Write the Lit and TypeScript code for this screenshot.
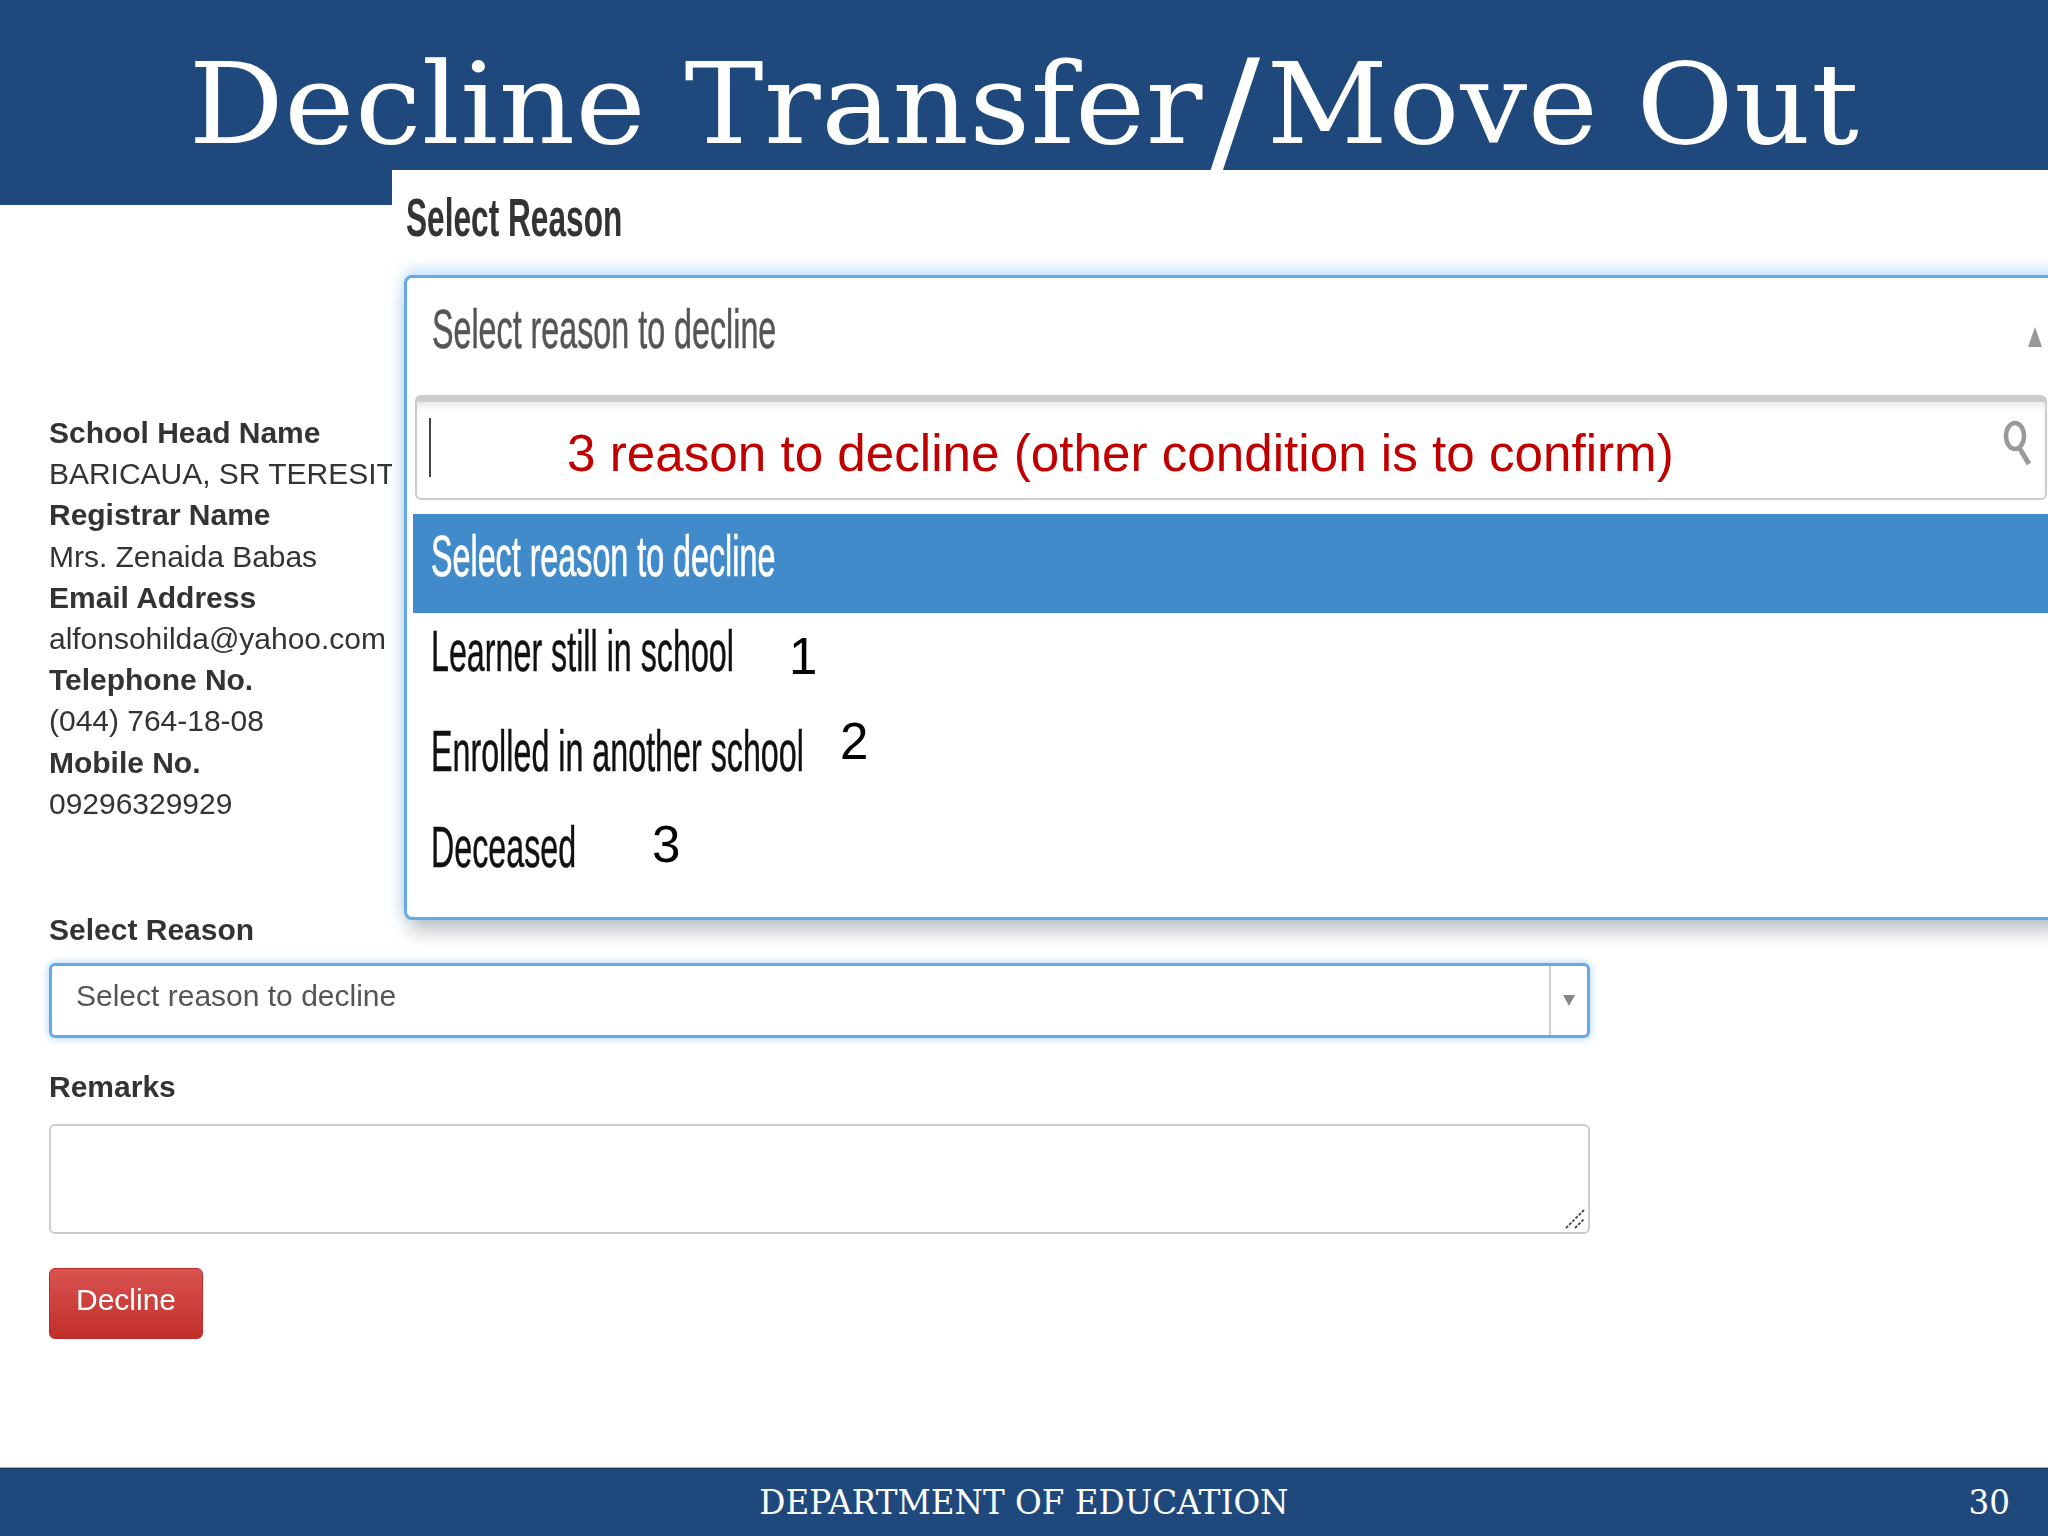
import { LitElement, html, css } from "lit";
import { customElement } from "lit/decorators.js";

@customElement("app-root")
export class AppRoot extends LitElement {
  static styles = css`
    :host {
      display: flex;
      flex-direction: column;
      position: relative;
      width: 2048px;
      height: 1536px;
      overflow: hidden;
      background: #fff;
      font-family: "Liberation Sans", Arial, sans-serif;
      color: #333;
    }
    * { box-sizing: border-box; }

    .banner {
      height: 205px;
      background: #1f497d;
      color: #fff;
      text-align: center;
      flex: none;
    }
    .title {
      margin: 0;
      padding-top: 39px;
      font-family: "DejaVu Serif", serif;
      font-weight: 400;
      font-size: 113px;
      line-height: 1.164;
      letter-spacing: 0.5px;
      white-space: nowrap;
      transform: scaleX(1.049);
      transform-origin: center;
    }
    .slash {
      font-size: 150px;
      line-height: 0;
      vertical-align: -24px;
      letter-spacing: 0;
      margin: 0 6px 0 4px;
    }

    .main {
      flex: 1;
      padding: 207px 0 0 49px;
      width: 1590px;
      filter: blur(0.4px);
    }
    .info { height: 412px; font-size: 30px; line-height: 41.2px; letter-spacing: -0.02px; }
    .info div { white-space: nowrap; }
    .info b, .lbl { font-weight: 700; }
    .lbl { font-size: 30px; line-height: 41px; white-space: nowrap; }
    .lbl.reason { margin-top: 85px; }
    .lbl.remarks { margin-top: 28px; }
    .select {
      display: flex;
      margin-top: 13px;
      height: 75px;
      border: 3px solid #66a9e4;
      border-radius: 6px;
      box-shadow: 0 0 8px rgba(102, 175, 233, 0.6);
      font-size: 30px;
      color: #555;
    }
    .select .val { flex: 1; padding: 9px 0 0 24px; line-height: 41px; }
    .select .caret {
      width: 38px;
      border-left: 2px solid #ccc;
      display: flex;
      align-items: center;
      justify-content: center;
    }
    .textarea {
      position: relative;
      margin-top: 17px;
      height: 110px;
      border: 2px solid #ccc;
      border-radius: 6px;
    }
    .grip { position: absolute; right: 2px; bottom: 2px; }
    .btn {
      margin-top: 34px;
      width: 154px;
      height: 71px;
      border: 1px solid #b92c28;
      border-radius: 6px;
      background: linear-gradient(#d9534f, #c12e2a);
      color: #fff;
      font: 30px/62px "Liberation Sans", Arial, sans-serif;
      text-align: center;
    }

    .footer {
      flex: none;
      height: 68px;
      background: #1f497d;
      border-top: 1px solid #17365d;
      box-shadow: 0 -1px 0 #9db4cf;
      color: #fff;
      font-family: "DejaVu Serif", serif;
      font-size: 32.6px;
      line-height: 68px;
      display: grid;
      grid-template-columns: 1fr auto 1fr;
    }
    .footer .num { justify-self: end; padding-right: 38px; }

    /* The enlarged screenshot pasted over the slide */
    .paste {
      position: absolute;
      left: 392px;
      top: 170px;
      right: -20px;
      height: 750px;
      background: #fff;
      padding-left: 12px;
    }
    .squeeze {
      display: block;
      white-space: nowrap;
      transform-origin: left top;
    }
    .big-label {
      height: 105px;
      padding: 21px 0 0 2px;
    }
    .big-label .squeeze {
      font-size: 53px;
      line-height: 53px;
      font-weight: 700;
      transform: scaleX(0.597);
    }
    .drop {
      height: 645px;
      border: 3px solid #66a9e4;
      border-right: 0;
      border-radius: 8px 0 0 8px;
      background: #fff;
      box-shadow: 0 -3px 16px rgba(102, 175, 233, 0.5), 0 18px 20px -6px rgba(0, 0, 0, 0.22);
    }
    .head {
      position: relative;
      height: 117px;
      padding: 23px 0 0 25px;
      font-size: 56px;
      line-height: 56px;
      color: #555;
    }
    .head .squeeze { transform: scaleX(0.576); -webkit-text-stroke: 0.5px #555; }
    .up { position: absolute; right: 26px; top: 49px; }
    .search {
      position: relative;
      margin: 0 21px 0 8px;
      height: 105px;
      border: 2px solid #ccc;
      border-top-width: 7px;
      border-radius: 6px;
      box-shadow: inset 0 6px 6px -2px #e8e8e8;
    }
    .cursor {
      position: absolute;
      left: 12px;
      top: 16px;
      width: 2px;
      height: 59px;
      background: #444;
    }
    .note {
      position: absolute;
      left: 150px;
      top: 22px;
      font-size: 51.2px;
      line-height: 59px;
      color: #c00000;
      white-space: nowrap;
    }
    .lens { position: absolute; right: 14px; top: 18px; }
    .opts { margin: 14px 0 0 6px; }
    .opt {
      position: relative;
      padding-left: 18px;
      font-size: 58px;
      line-height: 58px;
      color: #111;
    }
    .opt .squeeze { transform: scaleX(0.556); -webkit-text-stroke: 0.5px #111; }
    .opt.sel {
      height: 99px;
      padding-top: 14px;
      background: #428bca;
      color: #fff;
      font-size: 57px;
      line-height: 57px;
    }
    .opt.sel .squeeze { transform: scaleX(0.566); -webkit-text-stroke: 0.7px #fff; }
    .opt.a { height: 100px; padding-top: 9px; }
    .opt.b { height: 95px; padding-top: 9px; }
    .opt.c { height: 95px; padding-top: 10px; }
    .callout {
      position: absolute;
      font-size: 51px;
      line-height: 51px;
      color: #000;
    }
    .opt.a .callout { left: 376px; top: 18px; }
    .opt.b .callout { left: 427px; top: 3px; }
    .opt.c .callout { left: 239px; top: 11px; }
  `;

  render() {
    return html`
      <header class="banner">
        <h1 class="title">Decline Transfer<span class="slash">/</span>Move Out</h1>
      </header>

      <main class="main">
        <section class="info">
          <div><b>School Head Name</b></div>
          <div>BARICAUA, SR TERESIT</div>
          <div><b>Registrar Name</b></div>
          <div>Mrs. Zenaida Babas</div>
          <div><b>Email Address</b></div>
          <div>alfonsohilda@yahoo.com</div>
          <div><b>Telephone No.</b></div>
          <div>(044) 764-18-08</div>
          <div><b>Mobile No.</b></div>
          <div>09296329929</div>
        </section>

        <div class="lbl reason">Select Reason</div>
        <div class="select">
          <div class="val">Select reason to decline</div>
          <div class="caret">
            <svg width="12" height="11" viewBox="0 0 12 11"><path d="M0 0H12L6 11Z" fill="#888" /></svg>
          </div>
        </div>

        <div class="lbl remarks">Remarks</div>
        <div class="textarea">
          <svg class="grip" width="22" height="22" viewBox="0 0 22 22" fill="none" stroke="#444" stroke-width="1.8" stroke-dasharray="3 1.5">
            <path d="M2 20L20 2M11 20L20 11" />
          </svg>
        </div>

        <div class="btn">Decline</div>
      </main>

      <footer class="footer">
        <span></span>
        <span>DEPARTMENT OF EDUCATION</span>
        <span class="num">30</span>
      </footer>

      <section class="paste">
        <div class="big-label"><span class="squeeze">Select Reason</span></div>
        <div class="drop">
          <div class="head">
            <span class="squeeze">Select reason to decline</span>
            <svg class="up" width="14" height="20" viewBox="0 0 14 20"><path d="M7 0L14 20H0Z" fill="#999" /></svg>
          </div>
          <div class="search">
            <div class="cursor"></div>
            <div class="note">3 reason to decline (other condition is to confirm)</div>
            <svg class="lens" width="28" height="50" viewBox="0 0 28 50" fill="none" stroke="#999">
              <ellipse cx="12" cy="16" rx="9" ry="13" stroke-width="4.5" />
              <path d="M17 29L26 44" stroke-width="5" />
            </svg>
          </div>
          <div class="opts">
            <div class="opt sel"><span class="squeeze">Select reason to decline</span></div>
            <div class="opt a"><span class="squeeze">Learner still in school</span><span class="callout">1</span></div>
            <div class="opt b"><span class="squeeze">Enrolled in another school</span><span class="callout">2</span></div>
            <div class="opt c"><span class="squeeze">Deceased</span><span class="callout">3</span></div>
          </div>
        </div>
      </section>
    `;
  }
}
